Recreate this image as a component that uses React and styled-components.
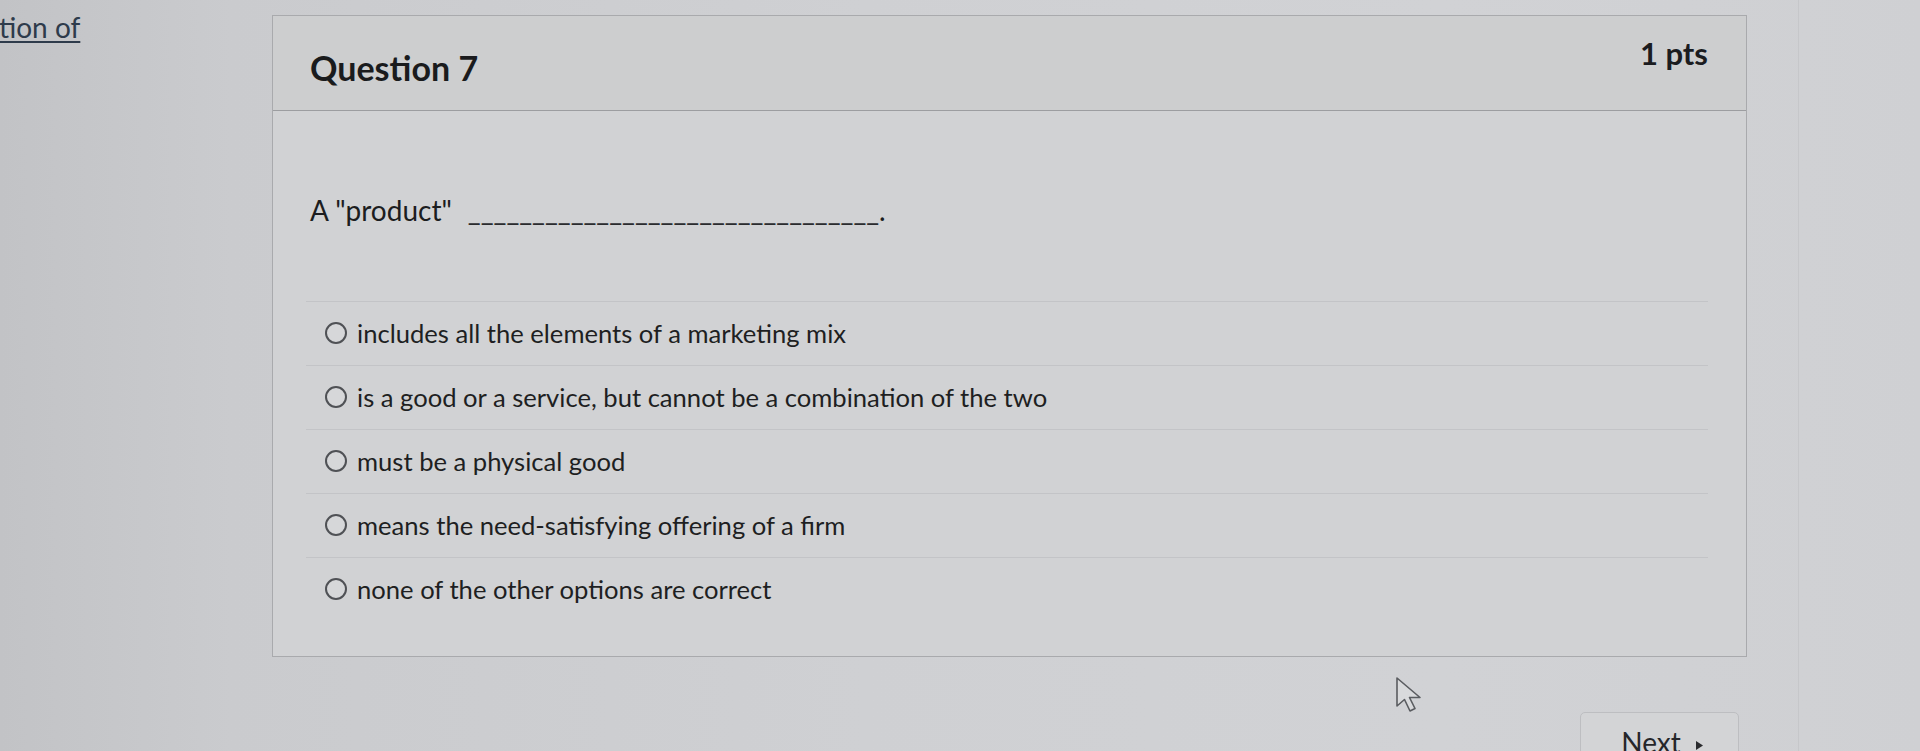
import React from "react";
import styled, { createGlobalStyle } from "styled-components";

const Global = createGlobalStyle`
  html, body { margin: 0; padding: 0; }
  body {
    width: 1920px;
    height: 751px;
    overflow: hidden;
    font-family: Lato, "Open Sans", "Liberation Sans", sans-serif;
    color: #1f2023;
    background: linear-gradient(90deg, #c2c3c6 0%, #cacbce 12%, #cfd0d3 45%, #d1d2d5 75%, #cfd0d3 100%);
  }
`;

const Page = styled.div`
  position: relative;
  display: flex;
  width: 1920px;
  height: 751px;
  overflow: hidden;
`;

const Sidebar = styled.div`
  width: 272px;
  flex: none;
  padding-top: 11px;
  box-sizing: border-box;
`;

const CrumbLink = styled.a`
  display: inline-block;
  margin-left: -1px;
  font-size: 28px;
  line-height: 32px;
  color: #2e3b4b;
  text-decoration: underline;
  text-decoration-thickness: 2px;
  text-underline-offset: 3px;
`;

const Main = styled.div`
  width: 1526px;
  flex: none;
  padding-top: 15px;
  box-sizing: border-box;
`;

const Card = styled.section`
  width: 1475px;
  box-sizing: border-box;
  border: 1px solid #a9aaad;
  background: #d1d2d4;
`;

const CardHeader = styled.header`
  height: 95px;
  box-sizing: border-box;
  display: flex;
  justify-content: space-between;
  align-items: flex-start;
  padding: 19px 38px 0 37px;
  background: #cdcecf;
  border-bottom: 1px solid #9c9da0;
`;

const Title = styled.h2`
  margin: 13px 0 0;
  font-size: 34px;
  font-weight: 700;
  line-height: 1.2;
  color: #1a1b1d;
`;

const Points = styled.div`
  font-size: 31px;
  font-weight: 700;
  line-height: 1.2;
  color: #1b1c1f;
`;

const CardBody = styled.div`
  padding: 83px 38px 35px 33px;
`;

const Prompt = styled.p`
  margin: 0 0 73px 4px;
  font-size: 28px;
  line-height: 1.2;
  color: #1c1d20;
`;

const Blank = styled.span`
  margin-left: 16px;
  color: #2a2b2e;
`;

const Answers = styled.div`
  display: flex;
  flex-direction: column;
`;

const Answer = styled.label`
  height: 64px;
  box-sizing: border-box;
  display: flex;
  align-items: center;
  gap: 10px;
  padding-left: 19px;
  border-top: 1px solid #c3c4c7;
`;

const Radio = styled.span`
  width: 22px;
  height: 22px;
  flex: none;
  box-sizing: border-box;
  border-radius: 50%;
  border: 2.5px solid #4f5155;
  background: #d6d7d9;
`;

const AnswerText = styled.span`
  font-size: 25.6px;
  line-height: 1.2;
  color: #1e1f22;
`;

const Footer = styled.div`
  width: 1475px;
  display: flex;
  justify-content: flex-end;
  padding: 55px 8px 0 0;
  box-sizing: border-box;
`;

const NextButton = styled.button`
  width: 159px;
  height: 60px;
  box-sizing: border-box;
  display: flex;
  align-items: flex-start;
  justify-content: center;
  gap: 14px;
  padding: 13px 0 0 6px;
  border: 1px solid #bdbec1;
  border-radius: 5px;
  background: #d3d4d6;
  font-family: inherit;
  font-size: 28px;
  line-height: 1.2;
  color: #25262a;
`;

const Caret = styled.svg`
  margin-top: 14px;
  width: 9px;
  height: 11px;
`;

const Gutter = styled.div`
  flex: 1;
  border-left: 1px solid #c6c7ca;
  background: linear-gradient(90deg, #d0d1d4, #cfd0d3);
`;

const Cursor = styled.svg`
  position: absolute;
  left: 1395px;
  top: 676px;
  width: 36px;
  height: 38px;
`;

const options = [
  "includes all the elements of a marketing mix",
  "is a good or a service, but cannot be a combination of the two",
  "must be a physical good",
  "means the need-satisfying offering of a firm",
  "none of the other options are correct",
];

export default function App() {
  return (
    <>
      <Global />
      <Page>
        <Sidebar>
          <CrumbLink href="#">tion of</CrumbLink>
        </Sidebar>
        <Main>
          <Card>
            <CardHeader>
              <Title>Question 7</Title>
              <Points>1 pts</Points>
            </CardHeader>
            <CardBody>
              <Prompt>
                A "product"<Blank>________________________________</Blank>.
              </Prompt>
              <Answers>
                {options.map((o) => (
                  <Answer key={o}>
                    <Radio />
                    <AnswerText>{o}</AnswerText>
                  </Answer>
                ))}
              </Answers>
            </CardBody>
          </Card>
          <Footer>
            <NextButton>
              Next
              <Caret viewBox="0 0 9 11">
                <path d="M1 1 L8 5.5 L1 10 Z" fill="#2a2b2e" />
              </Caret>
            </NextButton>
          </Footer>
        </Main>
        <Gutter />
        <Cursor viewBox="0 0 36 38">
          <path
            d="M2 2 L2 30 L9.5 23.5 L15 35 L20 32.5 L14.5 21.5 L25 21.5 Z"
            fill="#d9dadc"
            stroke="#5a5c60"
            strokeWidth="1.6"
            strokeLinejoin="round"
          />
        </Cursor>
      </Page>
    </>
  );
}
